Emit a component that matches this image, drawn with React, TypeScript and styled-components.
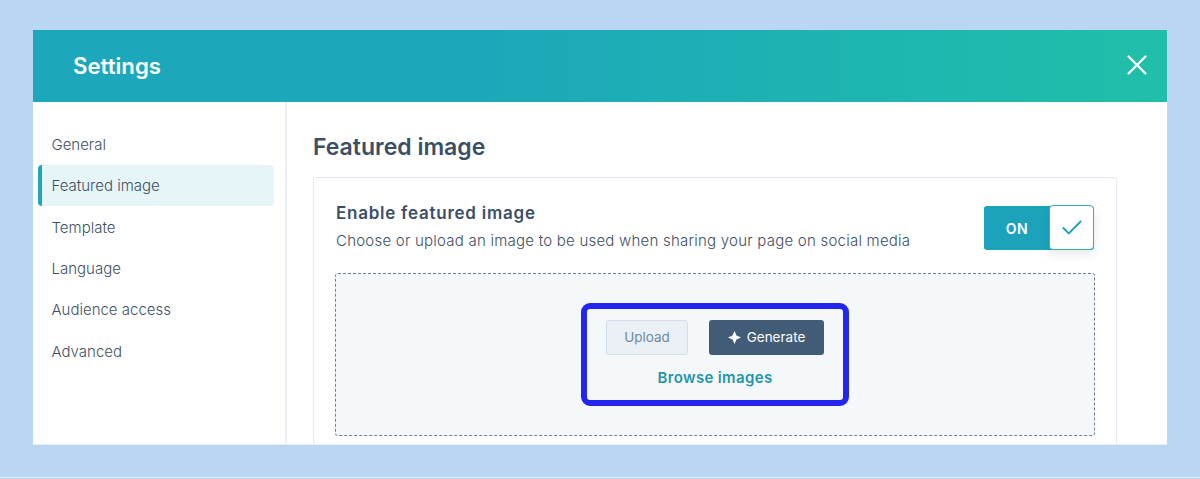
import styled, { createGlobalStyle } from 'styled-components';
import { X, Check } from 'lucide-react';

const GlobalStyle = createGlobalStyle`
  html, body {
    margin: 0;
    padding: 0;
  }
  body {
    font-family: 'Inter', 'Liberation Sans', sans-serif;
    background: #b9d6f2;
  }
`;

const NAV_ITEMS = ['General', 'Featured image', 'Template', 'Language', 'Audience access', 'Advanced'];

export default function App() {
  return (
    <>
      <GlobalStyle />
      <Page>
        <Modal>
          <Header>
            <Title>Settings</Title>
            <CloseButton>
              <X size={34} strokeWidth={1.6} />
            </CloseButton>
          </Header>
          <Body>
            <Sidebar>
              {NAV_ITEMS.map((item) => (
                <NavItem key={item} $active={item === 'Featured image'}>
                  {item}
                </NavItem>
              ))}
            </Sidebar>
            <Content>
              <Heading>Featured image</Heading>
              <Card>
                <CardTop>
                  <div>
                    <CardTitle>Enable featured image</CardTitle>
                    <CardText>Choose or upload an image to be used when sharing your page on social media</CardText>
                  </div>
                  <Toggle>
                    <ToggleLabel>ON</ToggleLabel>
                    <ToggleKnob>
                      <Check size={26} strokeWidth={1.8} />
                    </ToggleKnob>
                  </Toggle>
                </CardTop>
                <DropZone>
                  <Highlight>
                    <ButtonRow>
                      <UploadButton>Upload</UploadButton>
                      <GenerateButton>
                        <svg width="13" height="13" viewBox="0 0 13 13" fill="#fff">
                          <path d="M6.5 0 L8.5 4.5 L13 6.5 L8.5 8.5 L6.5 13 L4.5 8.5 L0 6.5 L4.5 4.5 Z" />
                        </svg>
                        Generate
                      </GenerateButton>
                    </ButtonRow>
                    <BrowseLink>Browse images</BrowseLink>
                  </Highlight>
                </DropZone>
              </Card>
            </Content>
          </Body>
        </Modal>
      </Page>
    </>
  );
}

const Page = styled.div`
  height: 478px;
  padding: 30px 33px 32px;
  box-sizing: border-box;
  background: #b9d6f2;
  border-bottom: 1px solid #e4eef9;
  margin-bottom: 1px;
`;

const Modal = styled.div`
  height: 100%;
  display: flex;
  flex-direction: column;
  background: #fff;
  overflow: hidden;
  border-bottom: 1px solid #e6eff8;
  box-sizing: border-box;
`;

const Header = styled.div`
  height: 72px;
  flex-shrink: 0;
  display: flex;
  align-items: center;
  justify-content: space-between;
  padding: 0 13px 0 40px;
  background: linear-gradient(90deg, #1ca7bb 0%, #1ca8ba 40%, #20bfa9 100%);
`;

const Title = styled.div`
  color: #fff;
  font-size: 22.2px;
  font-weight: 600;
  margin-bottom: 2px;
`;

const CloseButton = styled.div`
  display: flex;
  color: #fff;
  margin-bottom: 2px;
`;

const Body = styled.div`
  flex: 1;
  min-height: 0;
  display: flex;
`;

const Sidebar = styled.div`
  width: 254px;
  flex-shrink: 0;
  box-sizing: border-box;
  padding: 21.7px 11px 0 5px;
  border-right: 2px solid #eaf0f6;
  display: flex;
  flex-direction: column;
`;

const NavItem = styled.div<{ $active?: boolean }>`
  height: 41.4px;
  box-sizing: border-box;
  display: flex;
  align-items: center;
  padding-left: ${(p) => (p.$active ? '9.5px' : '13.5px')};
  border-left: ${(p) => (p.$active ? '4px solid #1ca7bb' : 'none')};
  border-radius: 4px;
  background: ${(p) => (p.$active ? '#e5f5f8' : 'transparent')};
  color: #3d5066;
  font-size: 15px;
  font-weight: 300;
`;

const Content = styled.div`
  flex: 1;
  min-width: 0;
  padding: 31px 50px 0 26px;
  display: flex;
  flex-direction: column;
`;

const Heading = styled.h2`
  margin: 0 0 15px;
  height: 29px;
  line-height: 29px;
  font-size: 23px;
  font-weight: 600;
  color: #3a4f66;
`;

const Card = styled.div`
  flex: 1;
  border: 1px solid #e6e9f3;
  border-bottom: none;
  border-radius: 3px 3px 0 0;
  padding: 0 21px;
`;

const CardTop = styled.div`
  height: 95px;
  box-sizing: border-box;
  padding: 25px 1px 0 1px;
  display: flex;
  justify-content: space-between;
  align-items: flex-start;
`;

const CardTitle = styled.div`
  font-size: 17px;
  font-weight: 600;
  line-height: 20px;
  letter-spacing: 0.75px;
  color: #3a4f66;
`;

const CardText = styled.div`
  margin-top: 8px;
  font-size: 15px;
  line-height: 20px;
  letter-spacing: 0.23px;
  font-weight: 300;
  color: #3d5066;
`;

const Toggle = styled.div`
  margin-top: 3px;
  width: 110px;
  height: 44px;
  display: flex;
  align-items: center;
  background: #1ca3bb;
  border-radius: 3px;
  position: relative;
`;

const ToggleLabel = styled.span`
  width: 66px;
  text-align: center;
  color: #fff;
  font-size: 14px;
  font-weight: 600;
  letter-spacing: 0.5px;
`;

const ToggleKnob = styled.div`
  position: absolute;
  top: -1px;
  right: 0;
  width: 45px;
  height: 45px;
  box-sizing: border-box;
  display: flex;
  align-items: center;
  justify-content: center;
  background: #fff;
  border: 1px solid #35acc2;
  border-radius: 4px;
  color: #1ca3bb;
  box-shadow: 0 4px 10px rgba(45, 62, 80, 0.12);
`;

const DropZone = styled.div`
  height: 163px;
  box-sizing: border-box;
  display: flex;
  align-items: center;
  justify-content: center;
  background: #f5f8fa;
  border: 1px dashed #6f7e9b;
  border-radius: 3px;
`;

const Highlight = styled.div`
  width: 268px;
  height: 103px;
  box-sizing: border-box;
  display: flex;
  flex-direction: column;
  align-items: center;
  padding-top: 11px;
  border: 6px solid #2226ee;
  border-radius: 9px;
`;

const ButtonRow = styled.div`
  display: flex;
  gap: 21px;
`;

const UploadButton = styled.div`
  width: 82px;
  height: 35px;
  box-sizing: border-box;
  padding-bottom: 2px;
  display: flex;
  align-items: center;
  justify-content: center;
  background: #eaf0f6;
  border: 1px solid #d4deea;
  border-radius: 3px;
  color: #7088a2;
  font-size: 13.5px;
  font-weight: 400;
`;

const GenerateButton = styled.div`
  width: 115px;
  height: 35px;
  box-sizing: border-box;
  padding-bottom: 1px;
  display: flex;
  align-items: center;
  justify-content: center;
  gap: 6px;
  background: #425b76;
  border-radius: 3px;
  color: #fff;
  font-size: 13.5px;
  font-weight: 400;
`;

const BrowseLink = styled.div`
  margin-top: 14px;
  font-size: 15px;
  line-height: 17px;
  letter-spacing: 0.35px;
  font-weight: 600;
  color: #1f96ad;
`;
